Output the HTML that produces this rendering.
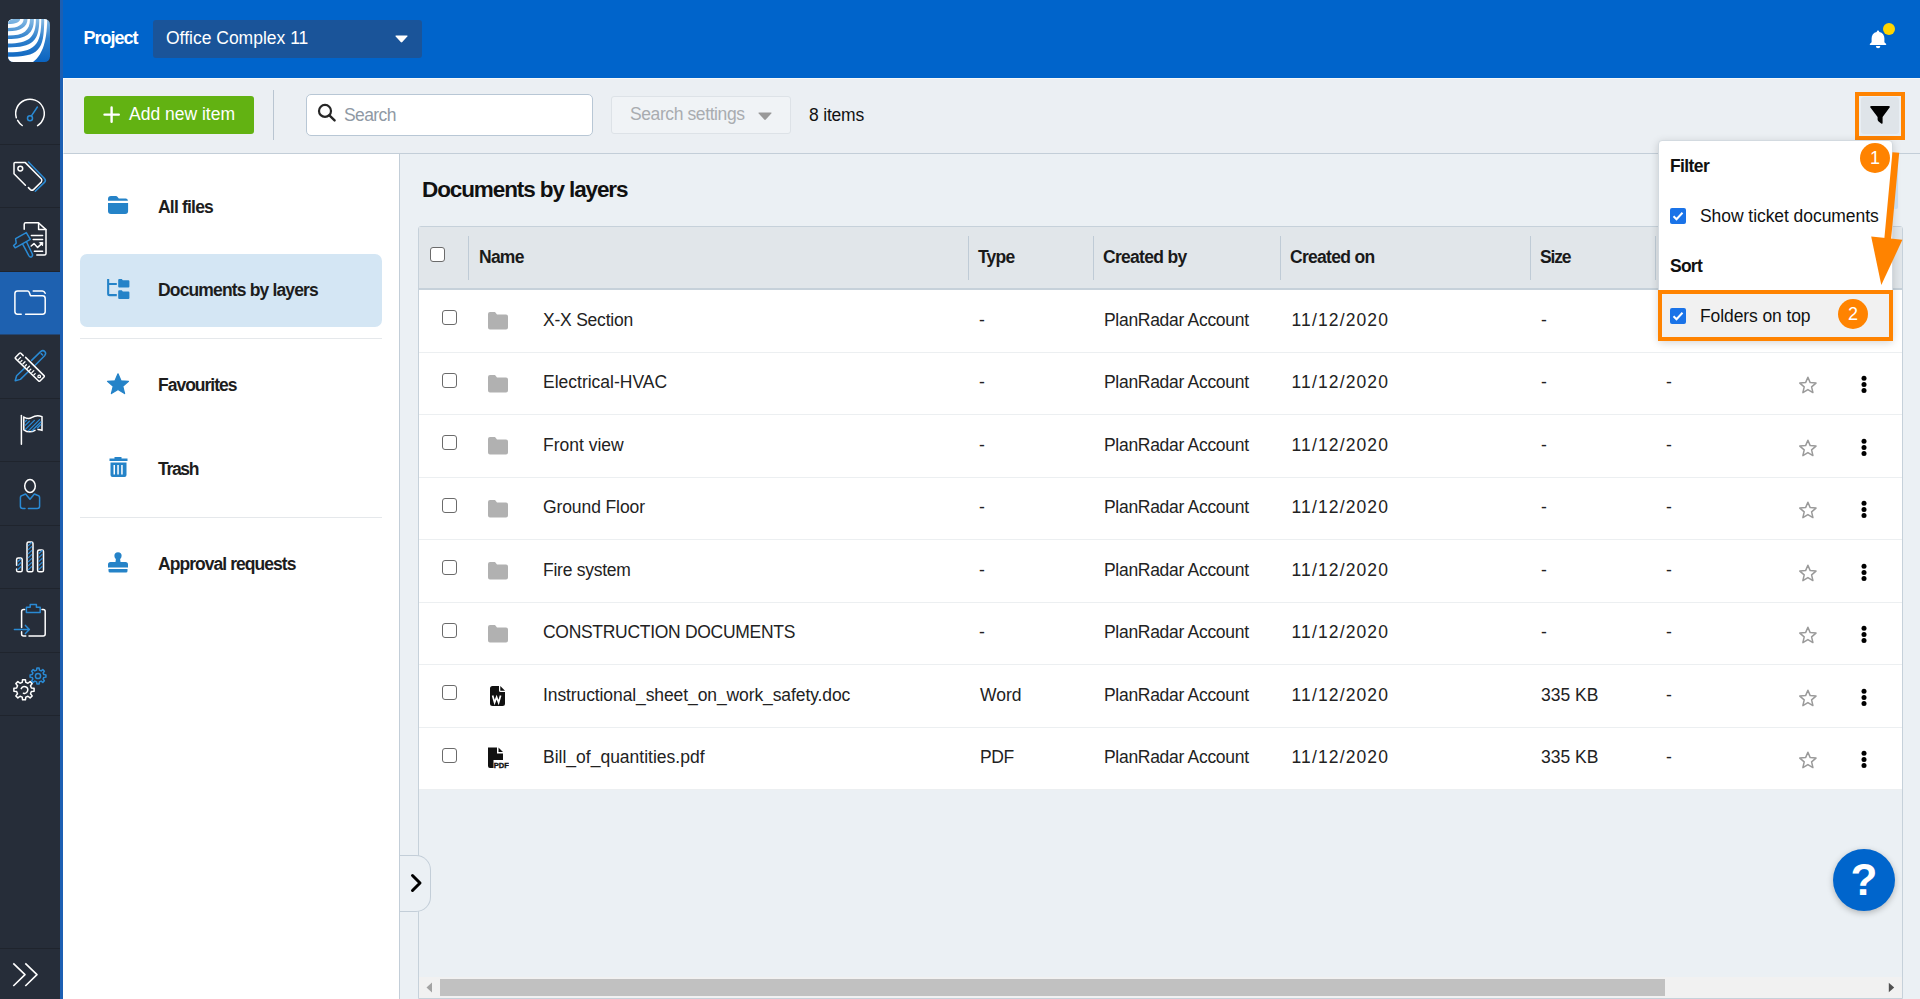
<!DOCTYPE html>
<html><head><meta charset="utf-8">
<style>
*{box-sizing:border-box;margin:0;padding:0}
html,body{width:1920px;height:999px;overflow:hidden;background:#ebf0f4;font-family:"Liberation Sans",sans-serif;color:#1d1d1d}
.a{position:absolute}
.t{position:absolute;white-space:nowrap;font-size:17.5px;line-height:20px}
.b{font-weight:700}
#side{left:0;top:0;width:60px;height:999px;background:#262d39}
#stripe{left:60px;top:0;width:3px;height:999px;background:#1c5fb3}
.sep{position:absolute;left:0;width:60px;height:1px;background:#1e232c}
#top{left:63px;top:0;width:1857px;height:78px;background:#0064cb}
#tool{left:63px;top:78px;width:1857px;height:76px;background:#ebeff3;border-top:1px solid #f7f9fa;border-left:1px solid #f7f9fa;border-bottom:1px solid #c3ced8}
#panel{left:63px;top:154px;width:337px;height:845px;background:#fff;border-right:1px solid #c3ced8}
#main{left:400px;top:154px;width:1520px;height:845px;background:#ebf0f4}
#tbl{left:418px;top:226px;width:1485px;height:773px;border:1px solid #c6d1da;border-radius:3px 3px 0 0;background:#ebf0f4}
.row{position:absolute;left:0;width:1483px;background:#fff;border-bottom:1px solid #edf0f2}
.cb{position:absolute;width:15px;height:15px;border:1.3px solid #6b6b6b;border-radius:3px;background:#fff}
.vd{position:absolute;width:1px;background:#bfcbd6}
</style></head><body>
<!-- SIDEBAR -->
<div id="side" class="a">
  <svg class="a" style="left:0;top:0" width="60" height="999" viewBox="0 0 60 999">
    <defs>
      <clipPath id="lg"><rect x="8" y="19" width="42" height="43" rx="5.5"/></clipPath>
    </defs>
    <linearGradient id="lgg" x1="0" y1="19" x2="0" y2="62" gradientUnits="userSpaceOnUse"><stop offset="0" stop-color="#86bbe4"/><stop offset="0.45" stop-color="#2f80cc"/><stop offset="1" stop-color="#0a63c0"/></linearGradient>
    <g clip-path="url(#lg)">
      <rect x="8" y="19" width="42" height="43" fill="url(#lgg)"/>
      <path d="M8 19 L8 64 L33 62 C41 56 47 44 47.2 19 Z" fill="#fff"/>
      <path d="M8 19 L8 56.7 C38.8 56.7 44.2 51.0 44.2 19 Z" fill="url(#lgg)"/>
      <path d="M8 19 L8 52.3 C34.6 52.3 41.3 45.6 41.3 19 Z" fill="#fff"/>
      <path d="M8 19 L8 47.4 C32.4 47.4 39.3 41.2 39.3 19 Z" fill="url(#lgg)"/>
      <path d="M8 19 L8 43.5 C28.9 43.5 35.9 37.4 35.9 19 Z" fill="#fff"/>
      <path d="M8 19 L8 39 C26.6 39 33.9 33.4 33.9 19 Z" fill="url(#lgg)"/>
      <path d="M8 19 L8 35.6 C23.4 35.6 30 30.6 30 19 Z" fill="#fff"/>
      <path d="M8 19 L8 31.2 C20.7 31.2 27.5 26.9 27.5 19 Z" fill="url(#lgg)"/>
      <path d="M8 19 L8 28 C17.7 28 23.6 24.6 23.6 19 Z" fill="#fff"/>
      <path d="M8 19 L8 24.1 C15.3 24.1 20.2 22.1 20.2 19 Z" fill="url(#lgg)"/>
    </g>
    <!-- separators -->
    <g fill="#1f242d">
      <rect x="0" y="144" width="60" height="1"/>
      <rect x="0" y="207" width="60" height="1"/>
      <rect x="0" y="271" width="60" height="1"/>
      <rect x="0" y="398" width="60" height="1"/>
      <rect x="0" y="461" width="60" height="1"/>
      <rect x="0" y="525" width="60" height="1"/>
      <rect x="0" y="588" width="60" height="1"/>
      <rect x="0" y="652" width="60" height="1"/>
      <rect x="0" y="715" width="60" height="1"/>
      <rect x="0" y="948" width="60" height="1"/>
    </g>
    <rect x="0" y="272" width="60" height="62.5" fill="#1e61b0"/>
    <g fill="none" stroke-width="1.5" stroke-linecap="round" stroke-linejoin="round">
      <!-- gauge -->
      <path d="M37.58 125.63 A14.3 14.3 0 1 0 16.32 117.68" stroke="#fff"/>
      <path d="M17.6 120.4 A14.3 14.3 0 0 0 22.2 125.5" stroke="#fff"/>
      <path d="M31.6 115.6 L37.4 107" stroke="#2a8ad4"/>
      <circle cx="30" cy="118.2" r="2.5" stroke="#2a8ad4"/>
      <!-- tag -->
      <path d="M25.4 185.3 L14 173.8 L14 163.6 Q14 162.6 15 162.6 L25.3 162.6 L41.3 178.8 Q42.7 180.4 41.3 182 L33.5 189.6 Q32 191 30.4 189.6 L28.4 187.6" stroke="#fff"/>
      <circle cx="20.3" cy="168.6" r="2.4" stroke="#fff"/>
      <path d="M28.5 162 L44.5 178.4 Q46.3 180.4 44.5 182.4 L35.3 191.2" stroke="#2a8ad4"/>
      <!-- doc + hammer -->
      <path d="M24.2 229.3 L24.2 224.2 Q24.2 222.7 25.7 222.7 L38.4 222.7 L46 229.6 L46 253.5 Q46 255 44.5 255 L36.8 255" stroke="#fff"/>
      <path d="M38.6 223 L38.6 229.6 L45.8 229.6" stroke="#fff"/>
      <path d="M31.4 235.5 L42.6 235.5 M33.2 239.4 L42.6 239.4 M34.4 251.2 L42.6 251.2" stroke="#fff"/>
      <path d="M31.2 246 L34 243.6 L37.6 247.4 L41.8 243.6" stroke="#fff"/>
      <path d="M39.8 242.6 L42.8 242.4 L42.6 245.4 Z" fill="#fff" stroke="#fff" stroke-width="1"/>
      <path d="M15.6 238.6 L26.3 232.6 L30.3 239.4 L15.2 247.8 L13.6 245.6 L16.2 243.2 Z" stroke="#2a8ad4"/>
      <path d="M22.8 244.3 L28.8 255.6 Q30.2 257.8 31.8 256.6 Q33 255.6 32.2 253.8 L26.6 242" stroke="#2a8ad4"/>
      <!-- folder (active) -->
      <path d="M21.2 314.2 L17.5 314.2 Q14.9 314.2 14.9 311.6 L14.9 293.6 Q14.9 291 17.5 291 L27.6 291 Q28.7 291 29.2 292.2 L30.5 295.8 L42.5 295.8 Q45.2 295.8 45.2 298.5 L45.2 311.6 Q45.2 314.2 42.5 314.2 L25.6 314.2" stroke="#fff"/>
      <path d="M33.2 291 L42.4 291 Q44.3 291 45.2 293.2" stroke="#fff"/>
      <!-- pencil -->
      <path d="M31.6 360.4 L40.6 351.6 Q43 349.6 44.8 351.6 Q46.6 353.6 44.6 355.8 L35.4 365 M24.4 368.4 L16.6 375.8 L15.2 380.8 L20.4 379.4 L28.2 371.8" stroke="#2a8ad4"/>
      <path d="M41.2 353.6 L42.6 355" stroke="#2a8ad4"/>
      <!-- ruler -->
      <path d="M15.4 358.2 L20.2 353.2 L44.2 376.4 L39.3 381.2 Z" fill="#262d39" stroke="none"/>
      <path d="M23.2 355.6 L20.9 353.3 Q20.2 352.6 19.5 353.3 L15.6 357.2 Q14.9 357.9 15.6 358.6 L38.6 381 Q39.3 381.7 40 381 L44 377 Q44.7 376.3 44 375.6 L25.6 357.4" stroke="#fff"/>
      <path d="M18.6 359.4 L20.6 357.4 M20.8 361.6 L22 360.4 M23 363.8 L25 361.8 M25.2 366 L26.4 364.8 M27.4 368.2 L29.4 366.2 M29.6 370.4 L30.8 369.2 M31.8 372.6 L33.8 370.6 M34 374.8 L35.2 373.6" stroke="#fff" stroke-width="1.3"/>
      <circle cx="39.2" cy="376.4" r="1.3" stroke="#fff" stroke-width="1.3"/>
      <!-- flag -->
      <path d="M21.4 415.6 L21.4 444.2" stroke="#fff"/>
      <path d="M23.8 417 L23.8 429.8 Q29 433.6 35 430.4 M38 429.4 Q40 429.6 42 430.4 L42 416.6 Q36.5 414.6 32 417.4 Q28 420 23.8 417" stroke="#fff"/>
      <path d="M25.2 421.6 L26.6 420.2 M25.2 425.4 L29.4 421.2 M25.4 429.4 L34.4 420.4 M28.6 430.6 L39.6 419.6 M32 430.8 L40.8 422 M37.4 428 L40.6 424.8" stroke="#2a8ad4" stroke-width="1.3"/>
      <!-- person -->
      <ellipse cx="30" cy="486" rx="5.3" ry="6.5" stroke="#fff"/>
      <path d="M25 508.4 L22.6 508.4 Q20.4 508.4 20.4 506.2 L20.4 497.8 Q20.4 495.6 22.6 495.2 L25.6 494 L30 499.2 L34.4 494 L37.4 495.2 Q39.6 495.6 39.6 497.8 L39.6 506.2 Q39.6 508.4 37.4 508.4 L28.4 508.4" stroke="#2a8ad4"/>
      <!-- bar chart -->
      <path d="M16.6 565.2 L16.6 559.6 Q16.6 558 18.2 558 L20.6 558 Q22.2 558 22.2 559.6 L22.2 570.2 Q22.2 571.8 20.6 571.8 L18.2 571.8 Q16.6 571.8 16.6 570.2 L16.6 569" stroke="#fff"/>
      <rect x="27" y="542" width="6" height="29.8" rx="1.6" stroke="#fff"/>
      <rect x="37.6" y="550" width="5.9" height="21.8" rx="1.6" stroke="#fff"/>
      <path d="M18 561.6 L20.6 559.2 M18 565.4 L20.8 562.8 M18 569.4 L20.8 566.8 M28.4 545.6 L31.6 542.6 M28.4 549.6 L31.6 546.6 M28.4 553.6 L31.6 550.6 M28.4 557.6 L31.6 554.6 M28.4 561.6 L31.6 558.6 M28.4 565.6 L31.6 562.6 M28.4 569.6 L31.6 566.6 M39 553.4 L42.2 550.6 M39 557.4 L42.2 554.4 M39 561.4 L42.2 558.4 M39 565.4 L42.2 562.4 M39 569.4 L42.2 566.4" stroke="#2a8ad4" stroke-width="1.3"/>
      <!-- clipboard -->
      <path d="M24.6 609.6 L23.6 609.6 Q21.6 609.6 21.6 611.6 L21.6 627.4 M21.6 631.8 L21.6 634 Q21.6 636 23.6 636 L25.8 636 M29 636 L43.2 636 Q45.2 636 45.2 634 L45.2 611.6 Q45.2 609.6 43.2 609.6 L42 609.6" stroke="#fff"/>
      <path d="M26.4 612.6 L40.2 612.6 L40.2 607.2 L36.4 607.2 L36.4 604.4 L30.2 604.4 L30.2 607.2 L26.4 607.2 Z" stroke="#2a8ad4"/>
      <path d="M14.4 629.5 L29.2 629.5 M25.4 625.4 L29.4 629.5 L25.4 633.6" stroke="#2a8ad4"/>
      <!-- gears -->
      <path d="M39.40 681.83 L39.13 683.92 L36.87 683.92 L36.60 681.83 L34.87 681.12 L33.20 682.40 L31.60 680.80 L32.88 679.13 L32.17 677.40 L30.08 677.13 L30.08 674.87 L32.17 674.60 L32.88 672.87 L31.60 671.20 L33.20 669.60 L34.87 670.88 L36.60 670.17 L36.87 668.08 L39.13 668.08 L39.40 670.17 L41.13 670.88 L42.80 669.60 L44.40 671.20 L43.12 672.87 L43.83 674.60 L45.92 674.87 L45.92 677.13 L43.83 677.40 L43.12 679.13 L44.40 680.80 L42.80 682.40 L41.13 681.12 Z" stroke="#2a8ad4"/>
      <circle cx="38" cy="676" r="2.6" stroke="#2a8ad4"/>
      <path d="M25.77 697.14 L25.44 699.85 L22.56 699.85 L22.23 697.14 L20.03 696.23 L17.88 697.91 L15.84 695.87 L17.52 693.72 L16.61 691.52 L13.90 691.19 L13.90 688.31 L16.61 687.98 L17.52 685.78 L15.84 683.63 L17.88 681.59 L20.03 683.27 L22.23 682.36 L22.56 679.65 L25.44 679.65 L25.77 682.36 L27.97 683.27 L30.12 681.59 L32.16 683.63 L30.48 685.78 L31.39 687.98 L34.10 688.31 L34.10 691.19 L31.39 691.52 L30.48 693.72 L32.16 695.87 L30.12 697.91 L27.97 696.23 Z" stroke="#fff"/>
      <path d="M21.2 688.6 A3.4 3.4 0 1 1 23.4 693.2" stroke="#fff"/>
      <!-- expand chevrons -->
      <path d="M13.3 963.3 L25 974.6 L13.3 986 M25.3 963.3 L37 974.6 L25.3 986" stroke="#fff" stroke-width="1.6" stroke-linecap="butt"/>
    </g>
  </svg>
</div>
<div id="stripe" class="a"></div>

<!-- TOP BAR -->
<div id="top" class="a"></div>
<div class="t b" style="left:83.5px;top:28px;font-size:18px;color:#fff;letter-spacing:-1px">Project</div>
<div class="a" style="left:153px;top:20px;width:269px;height:38px;background:#1a5499;border-radius:3px"></div>
<div class="t" style="left:166px;top:28px;color:#fff">Office Complex 11</div>
<svg class="a" style="left:394px;top:34px" width="15" height="10" viewBox="0 0 15 10"><path d="M2 1.5 L13 1.5 Q14 1.5 13.3 2.4 L8.3 8 Q7.5 8.8 6.7 8 L1.7 2.4 Q1 1.5 2 1.5 Z" fill="#fff"/></svg>
<!-- bell -->
<svg class="a" style="left:1866px;top:26px" width="24" height="26" viewBox="0 0 24 26">
  <path d="M12 4.6 Q13.2 4.6 13.3 6 Q18.4 7.2 18.4 12.6 L18.4 16.2 L20.2 18 Q20.6 19.1 19.5 19.1 L4.5 19.1 Q3.4 19.1 3.8 18 L5.6 16.2 L5.6 12.6 Q5.6 7.2 10.7 6 Q10.8 4.6 12 4.6 Z" fill="#fff"/>
  <path d="M9.9 20 L14.3 20 Q14.3 22.2 12.1 22.2 Q9.9 22.2 9.9 20 Z" fill="#fff"/>
</svg>
<div class="a" style="left:1883px;top:23px;width:12px;height:12px;border-radius:50%;background:#ffd500"></div>

<!-- TOOLBAR -->
<div id="tool" class="a"></div>
<div class="a" style="left:84px;top:96px;width:170px;height:38px;background:#62b212;border-radius:3px"></div>
<svg class="a" style="left:103px;top:106px" width="18" height="18" viewBox="0 0 18 18"><path d="M8.6 1.5 L8.6 15.8 M1.5 8.6 L15.8 8.6" stroke="#fff" stroke-width="2.4" stroke-linecap="round"/></svg>
<div class="t" style="left:129px;top:104px;color:#fff">Add new item</div>
<div class="a" style="left:273px;top:90px;width:1px;height:50px;background:#b9c5d1"></div>
<div class="a" style="left:306px;top:94px;width:287px;height:42px;background:#fff;border:1px solid #b8c7d5;border-radius:5px"></div>
<svg class="a" style="left:317px;top:103px" width="20" height="20" viewBox="0 0 20 20"><circle cx="8" cy="7.9" r="6" fill="none" stroke="#262626" stroke-width="2.2"/><path d="M12.4 12.4 L17.6 17.4" stroke="#262626" stroke-width="2.4" stroke-linecap="round"/></svg>
<div class="t" style="left:344px;top:105px;color:#8f99a4;letter-spacing:-0.6px">Search</div>
<div class="a" style="left:611px;top:96px;width:180px;height:38px;background:#f0f3f6;border:1px solid #dde2e7;border-radius:3px"></div>
<div class="t" style="left:630px;top:104px;color:#a9acb0;letter-spacing:-0.4px">Search settings</div>
<svg class="a" style="left:757px;top:111px" width="16" height="11" viewBox="0 0 16 11"><path d="M2 1.5 L14 1.5 Q15 1.5 14.3 2.4 L8.8 8.6 Q8 9.4 7.2 8.6 L1.7 2.4 Q1 1.5 2 1.5 Z" fill="#999"/></svg>
<div class="t" style="left:809px;top:105px;color:#111;letter-spacing:-0.2px">8 items</div>
<!-- filter btn -->
<div class="a" style="left:1855px;top:92px;width:50px;height:48px;border:4px solid #ff8300;background:#e8eef4"></div>
<div class="a" style="left:1861px;top:97px;width:38px;height:37px;border-radius:3px;background:#dfe4e9"></div>
<svg class="a" style="left:1868px;top:104px" width="24" height="22" viewBox="0 0 24 22"><path d="M3.4 2 L20.6 2 Q22.6 2 21.6 3.6 L14.6 13 L14.6 18.8 Q14.6 20.4 13.2 19.6 L10.6 17.6 Q9.6 16.8 9.6 15.6 L9.6 13 L2.4 3.6 Q1.4 2 3.4 2 Z" fill="#000"/></svg>

<!-- LEFT PANEL -->
<div id="panel" class="a"></div>
<div class="a" style="left:80px;top:254px;width:302px;height:73px;background:#d4e6f4;border-radius:7px"></div>
<div class="a" style="left:80px;top:338px;width:302px;height:1px;background:#e5e8eb"></div>
<div class="a" style="left:80px;top:517px;width:302px;height:1px;background:#e5e8eb"></div>
<svg class="a" style="left:100px;top:190px" width="36" height="400" viewBox="0 0 36 400">
  <g fill="#2583c8">
    <!-- all files folder -->
    <path d="M8 9 Q8 6 11 6 L16 6 Q16.8 6 17.4 6.8 L18.8 8.6 L25.8 8.6 Q27.6 8.6 28 10.8 L8 10.8 Z"/>
    <path d="M8 13 L28.1 13 L28.1 21 Q28.1 24 25.1 24 L11 24 Q8 24 8 21 Z"/>
    <!-- docs by layers icon -->
    <path d="M7.1 89 L9.2 89 L9.2 93 L16.8 93 L16.8 95 L9.2 95 L9.2 104.1 L16.8 104.1 L16.8 106.3 L9.6 106.3 Q7.1 106.3 7.1 103.8 Z"/>
    <path d="M18.2 90 Q18.2 89 19.2 89 L21.8 89 L22.8 90.3 L28.4 90.3 Q29.4 90.3 29.4 91.3 L29.4 96.6 Q29.4 97.6 28.4 97.6 L19.2 97.6 Q18.2 97.6 18.2 96.6 Z"/>
    <path d="M18.2 101.2 Q18.2 100.2 19.2 100.2 L21.8 100.2 L22.8 101.5 L28.4 101.5 Q29.4 101.5 29.4 102.5 L29.4 107.9 Q29.4 108.9 28.4 108.9 L19.2 108.9 Q18.2 108.9 18.2 107.9 Z"/>
    <!-- star x107.5-128.75 y373.75-393.75 -->
    <path d="M18 183.8 L21 190.8 L28.5 191.3 L22.8 196.3 L24.6 203.6 L18 199.6 L11.4 203.6 L13.2 196.3 L7.5 191.3 L15 190.8 Z" stroke="#2583c8" stroke-width="1.2" stroke-linejoin="round"/>
    <!-- trash x109.5-127.5 y457-477 -->
    <path d="M14.5 267 L21.5 267 L21.5 268.5 L27.5 268.5 L27.5 271 L9.5 271 L9.5 268.5 L14.5 268.5 Z"/>
    <path d="M10.5 272.5 L26.5 272.5 L26.5 285 Q26.5 287 24.5 287 L12.5 287 Q10.5 287 10.5 285 Z M13.5 275 L13.5 284.5 L15 284.5 L15 275 Z M17.3 275 L17.3 284.5 L18.8 284.5 L18.8 275 Z M21.2 275 L21.2 284.5 L22.7 284.5 L22.7 275 Z" fill-rule="evenodd"/>
    <!-- stamp x107.5-128 y552.5-572.5 -->
    <circle cx="18" cy="365.8" r="3.6"/>
    <path d="M16 368 L20 368 L20.5 372 L25.5 372 Q28 372 28 374.5 L28 377.5 L8 377.5 L8 374.5 Q8 372 10.5 372 L15.5 372 Z"/>
    <path d="M8.5 379 L27.5 379 L27.5 381 Q27.5 382.5 26 382.5 L10 382.5 Q8.5 382.5 8.5 381 Z"/>
  </g>
</svg>
<div class="t b" style="left:158px;top:197px;letter-spacing:-0.8px">All files</div>
<div class="t b" style="left:158px;top:280px;letter-spacing:-0.85px">Documents by layers</div>
<div class="t b" style="left:158px;top:375px;letter-spacing:-1px">Favourites</div>
<div class="t b" style="left:158px;top:459px;letter-spacing:-1.3px">Trash</div>
<div class="t b" style="left:158px;top:554px;letter-spacing:-0.95px">Approval requests</div>

<!-- MAIN -->
<div id="main" class="a"></div>
<div class="t b" style="left:422px;top:177px;font-size:22.5px;line-height:26px;letter-spacing:-1.1px;color:#111">Documents by layers</div>
<div id="tbl" class="a"></div>
<div class="a" style="left:419px;top:227px;width:1483px;height:62px;background:#e1e6ea;border-bottom:1px solid #c6d1da"></div>
<div class="a" style="left:419px;top:289px;width:1483px;height:1px;background:#c6d1da"></div>
<div class="cb" style="left:430px;top:247px"></div>
<div class="vd" style="left:468px;top:236px;height:44px"></div>
<div class="vd" style="left:968px;top:236px;height:44px"></div>
<div class="vd" style="left:1093px;top:236px;height:44px"></div>
<div class="vd" style="left:1280px;top:236px;height:44px"></div>
<div class="vd" style="left:1530px;top:236px;height:44px"></div>
<div class="vd" style="left:1655px;top:236px;height:44px"></div>
<div class="t b" style="left:479px;top:247px;letter-spacing:-0.75px;color:#1a1a1a">Name</div>
<div class="t b" style="left:978px;top:247px;letter-spacing:-0.8px;color:#1a1a1a">Type</div>
<div class="t b" style="left:1103px;top:247px;letter-spacing:-0.7px;color:#1a1a1a">Created by</div>
<div class="t b" style="left:1290px;top:247px;letter-spacing:-0.7px;color:#1a1a1a">Created on</div>
<div class="t b" style="left:1540px;top:247px;letter-spacing:-1.2px;color:#1a1a1a">Size</div>
<div class="a" style="left:419px;top:290.0px;width:1483px;height:62.5px;background:#fff"></div>
<div class="a" style="left:419px;top:352px;width:1483px;height:1px;background:#eceff1"></div>
<div class="cb" style="left:442px;top:310.0px"></div>
<svg class="a" style="left:487px;top:311.0px" width="22" height="20" viewBox="0 0 22 20"><path d="M1 3 Q1 1 3 1 L8 1 L10 3.5 L19 3.5 Q21 3.5 21 5.5 L21 16.5 Q21 18.5 19 18.5 L3 18.5 Q1 18.5 1 16.5 Z" fill="#b1b1b1"/></svg>
<div class="t" style="left:543px;top:309.8px;color:#222;letter-spacing:-0.22px">X-X Section</div>
<div class="t" style="left:979px;top:309.8px;color:#222;letter-spacing:0px">-</div>
<div class="t" style="left:1104px;top:309.8px;color:#222;letter-spacing:-0.3px">PlanRadar Account</div>
<div class="t" style="left:1291.5px;top:309.8px;color:#222;letter-spacing:1.13px">11/12/2020</div>
<div class="t" style="left:1541px;top:309.8px;color:#222">-</div>
<div class="t" style="left:1666px;top:309.8px;color:#222">-</div>
<svg class="a" style="left:1797px;top:312.5px" width="22" height="20" viewBox="0 0 22 20"><path d="M10.9 2.2 L13.2 7.6 L19 8.1 L14.6 11.9 L15.9 17.6 L10.9 14.6 L5.9 17.6 L7.2 11.9 L2.8 8.1 L8.6 7.6 Z" fill="none" stroke="#9a9a9a" stroke-width="1.5" stroke-linejoin="round"/></svg>
<svg class="a" style="left:1859px;top:312.5px" width="10" height="20" viewBox="0 0 10 20"><circle cx="5" cy="3.2" r="2.5" fill="#000"/><circle cx="5" cy="9.4" r="2.5" fill="#000"/><circle cx="5" cy="15.6" r="2.5" fill="#000"/></svg>
<div class="a" style="left:419px;top:352.5px;width:1483px;height:62.5px;background:#fff"></div>
<div class="a" style="left:419px;top:414px;width:1483px;height:1px;background:#eceff1"></div>
<div class="cb" style="left:442px;top:372.5px"></div>
<svg class="a" style="left:487px;top:373.5px" width="22" height="20" viewBox="0 0 22 20"><path d="M1 3 Q1 1 3 1 L8 1 L10 3.5 L19 3.5 Q21 3.5 21 5.5 L21 16.5 Q21 18.5 19 18.5 L3 18.5 Q1 18.5 1 16.5 Z" fill="#b1b1b1"/></svg>
<div class="t" style="left:543px;top:372.3px;color:#222;letter-spacing:0px">Electrical-HVAC</div>
<div class="t" style="left:979px;top:372.3px;color:#222;letter-spacing:0px">-</div>
<div class="t" style="left:1104px;top:372.3px;color:#222;letter-spacing:-0.3px">PlanRadar Account</div>
<div class="t" style="left:1291.5px;top:372.3px;color:#222;letter-spacing:1.13px">11/12/2020</div>
<div class="t" style="left:1541px;top:372.3px;color:#222">-</div>
<div class="t" style="left:1666px;top:372.3px;color:#222">-</div>
<svg class="a" style="left:1797px;top:375.0px" width="22" height="20" viewBox="0 0 22 20"><path d="M10.9 2.2 L13.2 7.6 L19 8.1 L14.6 11.9 L15.9 17.6 L10.9 14.6 L5.9 17.6 L7.2 11.9 L2.8 8.1 L8.6 7.6 Z" fill="none" stroke="#9a9a9a" stroke-width="1.5" stroke-linejoin="round"/></svg>
<svg class="a" style="left:1859px;top:375.0px" width="10" height="20" viewBox="0 0 10 20"><circle cx="5" cy="3.2" r="2.5" fill="#000"/><circle cx="5" cy="9.4" r="2.5" fill="#000"/><circle cx="5" cy="15.6" r="2.5" fill="#000"/></svg>
<div class="a" style="left:419px;top:415.0px;width:1483px;height:62.5px;background:#fff"></div>
<div class="a" style="left:419px;top:477px;width:1483px;height:1px;background:#eceff1"></div>
<div class="cb" style="left:442px;top:435.0px"></div>
<svg class="a" style="left:487px;top:436.0px" width="22" height="20" viewBox="0 0 22 20"><path d="M1 3 Q1 1 3 1 L8 1 L10 3.5 L19 3.5 Q21 3.5 21 5.5 L21 16.5 Q21 18.5 19 18.5 L3 18.5 Q1 18.5 1 16.5 Z" fill="#b1b1b1"/></svg>
<div class="t" style="left:543px;top:434.8px;color:#222;letter-spacing:0px">Front view</div>
<div class="t" style="left:979px;top:434.8px;color:#222;letter-spacing:0px">-</div>
<div class="t" style="left:1104px;top:434.8px;color:#222;letter-spacing:-0.3px">PlanRadar Account</div>
<div class="t" style="left:1291.5px;top:434.8px;color:#222;letter-spacing:1.13px">11/12/2020</div>
<div class="t" style="left:1541px;top:434.8px;color:#222">-</div>
<div class="t" style="left:1666px;top:434.8px;color:#222">-</div>
<svg class="a" style="left:1797px;top:437.5px" width="22" height="20" viewBox="0 0 22 20"><path d="M10.9 2.2 L13.2 7.6 L19 8.1 L14.6 11.9 L15.9 17.6 L10.9 14.6 L5.9 17.6 L7.2 11.9 L2.8 8.1 L8.6 7.6 Z" fill="none" stroke="#9a9a9a" stroke-width="1.5" stroke-linejoin="round"/></svg>
<svg class="a" style="left:1859px;top:437.5px" width="10" height="20" viewBox="0 0 10 20"><circle cx="5" cy="3.2" r="2.5" fill="#000"/><circle cx="5" cy="9.4" r="2.5" fill="#000"/><circle cx="5" cy="15.6" r="2.5" fill="#000"/></svg>
<div class="a" style="left:419px;top:477.5px;width:1483px;height:62.5px;background:#fff"></div>
<div class="a" style="left:419px;top:539px;width:1483px;height:1px;background:#eceff1"></div>
<div class="cb" style="left:442px;top:497.5px"></div>
<svg class="a" style="left:487px;top:498.5px" width="22" height="20" viewBox="0 0 22 20"><path d="M1 3 Q1 1 3 1 L8 1 L10 3.5 L19 3.5 Q21 3.5 21 5.5 L21 16.5 Q21 18.5 19 18.5 L3 18.5 Q1 18.5 1 16.5 Z" fill="#b1b1b1"/></svg>
<div class="t" style="left:543px;top:497.3px;color:#222;letter-spacing:-0.1px">Ground Floor</div>
<div class="t" style="left:979px;top:497.3px;color:#222;letter-spacing:0px">-</div>
<div class="t" style="left:1104px;top:497.3px;color:#222;letter-spacing:-0.3px">PlanRadar Account</div>
<div class="t" style="left:1291.5px;top:497.3px;color:#222;letter-spacing:1.13px">11/12/2020</div>
<div class="t" style="left:1541px;top:497.3px;color:#222">-</div>
<div class="t" style="left:1666px;top:497.3px;color:#222">-</div>
<svg class="a" style="left:1797px;top:500.0px" width="22" height="20" viewBox="0 0 22 20"><path d="M10.9 2.2 L13.2 7.6 L19 8.1 L14.6 11.9 L15.9 17.6 L10.9 14.6 L5.9 17.6 L7.2 11.9 L2.8 8.1 L8.6 7.6 Z" fill="none" stroke="#9a9a9a" stroke-width="1.5" stroke-linejoin="round"/></svg>
<svg class="a" style="left:1859px;top:500.0px" width="10" height="20" viewBox="0 0 10 20"><circle cx="5" cy="3.2" r="2.5" fill="#000"/><circle cx="5" cy="9.4" r="2.5" fill="#000"/><circle cx="5" cy="15.6" r="2.5" fill="#000"/></svg>
<div class="a" style="left:419px;top:540.0px;width:1483px;height:62.5px;background:#fff"></div>
<div class="a" style="left:419px;top:602px;width:1483px;height:1px;background:#eceff1"></div>
<div class="cb" style="left:442px;top:560.0px"></div>
<svg class="a" style="left:487px;top:561.0px" width="22" height="20" viewBox="0 0 22 20"><path d="M1 3 Q1 1 3 1 L8 1 L10 3.5 L19 3.5 Q21 3.5 21 5.5 L21 16.5 Q21 18.5 19 18.5 L3 18.5 Q1 18.5 1 16.5 Z" fill="#b1b1b1"/></svg>
<div class="t" style="left:543px;top:559.8px;color:#222;letter-spacing:-0.25px">Fire system</div>
<div class="t" style="left:979px;top:559.8px;color:#222;letter-spacing:0px">-</div>
<div class="t" style="left:1104px;top:559.8px;color:#222;letter-spacing:-0.3px">PlanRadar Account</div>
<div class="t" style="left:1291.5px;top:559.8px;color:#222;letter-spacing:1.13px">11/12/2020</div>
<div class="t" style="left:1541px;top:559.8px;color:#222">-</div>
<div class="t" style="left:1666px;top:559.8px;color:#222">-</div>
<svg class="a" style="left:1797px;top:562.5px" width="22" height="20" viewBox="0 0 22 20"><path d="M10.9 2.2 L13.2 7.6 L19 8.1 L14.6 11.9 L15.9 17.6 L10.9 14.6 L5.9 17.6 L7.2 11.9 L2.8 8.1 L8.6 7.6 Z" fill="none" stroke="#9a9a9a" stroke-width="1.5" stroke-linejoin="round"/></svg>
<svg class="a" style="left:1859px;top:562.5px" width="10" height="20" viewBox="0 0 10 20"><circle cx="5" cy="3.2" r="2.5" fill="#000"/><circle cx="5" cy="9.4" r="2.5" fill="#000"/><circle cx="5" cy="15.6" r="2.5" fill="#000"/></svg>
<div class="a" style="left:419px;top:602.5px;width:1483px;height:62.5px;background:#fff"></div>
<div class="a" style="left:419px;top:664px;width:1483px;height:1px;background:#eceff1"></div>
<div class="cb" style="left:442px;top:622.5px"></div>
<svg class="a" style="left:487px;top:623.5px" width="22" height="20" viewBox="0 0 22 20"><path d="M1 3 Q1 1 3 1 L8 1 L10 3.5 L19 3.5 Q21 3.5 21 5.5 L21 16.5 Q21 18.5 19 18.5 L3 18.5 Q1 18.5 1 16.5 Z" fill="#b1b1b1"/></svg>
<div class="t" style="left:543px;top:622.3px;color:#222;letter-spacing:-0.3px">CONSTRUCTION DOCUMENTS</div>
<div class="t" style="left:979px;top:622.3px;color:#222;letter-spacing:0px">-</div>
<div class="t" style="left:1104px;top:622.3px;color:#222;letter-spacing:-0.3px">PlanRadar Account</div>
<div class="t" style="left:1291.5px;top:622.3px;color:#222;letter-spacing:1.13px">11/12/2020</div>
<div class="t" style="left:1541px;top:622.3px;color:#222">-</div>
<div class="t" style="left:1666px;top:622.3px;color:#222">-</div>
<svg class="a" style="left:1797px;top:625.0px" width="22" height="20" viewBox="0 0 22 20"><path d="M10.9 2.2 L13.2 7.6 L19 8.1 L14.6 11.9 L15.9 17.6 L10.9 14.6 L5.9 17.6 L7.2 11.9 L2.8 8.1 L8.6 7.6 Z" fill="none" stroke="#9a9a9a" stroke-width="1.5" stroke-linejoin="round"/></svg>
<svg class="a" style="left:1859px;top:625.0px" width="10" height="20" viewBox="0 0 10 20"><circle cx="5" cy="3.2" r="2.5" fill="#000"/><circle cx="5" cy="9.4" r="2.5" fill="#000"/><circle cx="5" cy="15.6" r="2.5" fill="#000"/></svg>
<div class="a" style="left:419px;top:665.0px;width:1483px;height:62.5px;background:#fff"></div>
<div class="a" style="left:419px;top:727px;width:1483px;height:1px;background:#eceff1"></div>
<div class="cb" style="left:442px;top:685.0px"></div>
<svg class="a" style="left:486px;top:685px" width="22" height="24" viewBox="0 0 22 24"><path d="M6.5 1 L13 1 L13 5.5 Q13 7 14.5 7 L19 7 L19 18.5 Q19 21 16.5 21 L6.5 21 Q4 21 4 18.5 L4 3.5 Q4 1 6.5 1 Z M14.3 1 L19 5.7 L14.3 5.7 Z" fill="#111"/><path d="M6.6 10.5 L8.6 17.5 L10.6 12.2 L12.6 17.5 L14.6 10.5" fill="none" stroke="#fff" stroke-width="1.7" stroke-linejoin="miter"/></svg>
<div class="t" style="left:543px;top:684.8px;color:#222;letter-spacing:-0.1px">Instructional_sheet_on_work_safety.doc</div>
<div class="t" style="left:980px;top:684.8px;color:#222;letter-spacing:0px">Word</div>
<div class="t" style="left:1104px;top:684.8px;color:#222;letter-spacing:-0.3px">PlanRadar Account</div>
<div class="t" style="left:1291.5px;top:684.8px;color:#222;letter-spacing:1.13px">11/12/2020</div>
<div class="t" style="left:1541px;top:684.8px;color:#222">335 KB</div>
<div class="t" style="left:1666px;top:684.8px;color:#222">-</div>
<svg class="a" style="left:1797px;top:687.5px" width="22" height="20" viewBox="0 0 22 20"><path d="M10.9 2.2 L13.2 7.6 L19 8.1 L14.6 11.9 L15.9 17.6 L10.9 14.6 L5.9 17.6 L7.2 11.9 L2.8 8.1 L8.6 7.6 Z" fill="none" stroke="#9a9a9a" stroke-width="1.5" stroke-linejoin="round"/></svg>
<svg class="a" style="left:1859px;top:687.5px" width="10" height="20" viewBox="0 0 10 20"><circle cx="5" cy="3.2" r="2.5" fill="#000"/><circle cx="5" cy="9.4" r="2.5" fill="#000"/><circle cx="5" cy="15.6" r="2.5" fill="#000"/></svg>
<div class="a" style="left:419px;top:727.5px;width:1483px;height:62.5px;background:#fff"></div>
<div class="a" style="left:419px;top:789px;width:1483px;height:1px;background:#eceff1"></div>
<div class="cb" style="left:442px;top:747.5px"></div>
<svg class="a" style="left:485px;top:746px" width="24" height="24" viewBox="0 0 24 24"><path d="M3 1.5 L12 1.5 L12 7.5 L18 7.5 L18 14 L8.5 14 L8.5 22 L5 22 Q3 22 3 20 Z M13.5 1.5 L18 6 L13.5 6 Z" fill="#111"/><text x="8.8" y="22" font-family="Liberation Sans" font-weight="700" font-size="7.6" fill="#111" stroke="#111" stroke-width="0.35" letter-spacing="-0.1">PDF</text></svg>
<div class="t" style="left:543px;top:747.3px;color:#222;letter-spacing:0px">Bill_of_quantities.pdf</div>
<div class="t" style="left:980px;top:747.3px;color:#222;letter-spacing:-0.4px">PDF</div>
<div class="t" style="left:1104px;top:747.3px;color:#222;letter-spacing:-0.3px">PlanRadar Account</div>
<div class="t" style="left:1291.5px;top:747.3px;color:#222;letter-spacing:1.13px">11/12/2020</div>
<div class="t" style="left:1541px;top:747.3px;color:#222">335 KB</div>
<div class="t" style="left:1666px;top:747.3px;color:#222">-</div>
<svg class="a" style="left:1797px;top:750.0px" width="22" height="20" viewBox="0 0 22 20"><path d="M10.9 2.2 L13.2 7.6 L19 8.1 L14.6 11.9 L15.9 17.6 L10.9 14.6 L5.9 17.6 L7.2 11.9 L2.8 8.1 L8.6 7.6 Z" fill="none" stroke="#9a9a9a" stroke-width="1.5" stroke-linejoin="round"/></svg>
<svg class="a" style="left:1859px;top:750.0px" width="10" height="20" viewBox="0 0 10 20"><circle cx="5" cy="3.2" r="2.5" fill="#000"/><circle cx="5" cy="9.4" r="2.5" fill="#000"/><circle cx="5" cy="15.6" r="2.5" fill="#000"/></svg>
<div class="a" style="left:419px;top:977px;width:1483px;height:21px;background:#f1f1f1"></div>
<div class="a" style="left:440px;top:979px;width:1225px;height:17px;background:#c1c1c1"></div>
<svg class="a" style="left:424px;top:981px" width="10" height="13" viewBox="0 0 10 13"><path d="M8 1.5 L2.5 6.5 L8 11.5 Z" fill="#a3a3a3"/></svg>
<svg class="a" style="left:1886px;top:981px" width="10" height="13" viewBox="0 0 10 13"><path d="M2.8 1.8 L8.2 6.5 L2.8 11.2 Z" fill="#505050"/></svg>
<div class="a" style="left:1833px;top:849px;width:62px;height:62px;border-radius:50%;background:#0065cc;box-shadow:0 2px 6px rgba(0,0,0,0.25)"></div>
<div class="t b" style="left:1833px;top:855px;width:62px;text-align:center;font-size:44px;line-height:50px;color:#fff">?</div>
<!-- collapse handle -->
<div class="a" style="left:399px;top:855px;width:32px;height:57px;background:#ebf0f4;border:1px solid #c3ced8;border-left:none;border-radius:0 15px 15px 0"></div>
<div class="a" style="left:399px;top:855px;width:1px;height:57px;background:#c3ced8"></div>
<svg class="a" style="left:408px;top:872px" width="16" height="22" viewBox="0 0 16 22"><path d="M4.5 3.5 L12 11 L4.5 18.5" fill="none" stroke="#000" stroke-width="3" stroke-linecap="round" stroke-linejoin="round"/></svg>

<!-- POPUP -->
<div class="a" style="left:1658px;top:140px;width:235px;height:201px;background:#fff;border-radius:4px;border:1px solid #d3dae0;box-shadow:0 2px 8px rgba(0,0,0,0.16)"></div>
<div class="t b" style="left:1670px;top:156px;letter-spacing:-0.6px;color:#111">Filter</div>
<div class="a" style="left:1670px;top:208px;width:16px;height:16px;border-radius:2px;background:#1a73e8"></div>
<svg class="a" style="left:1670px;top:208px" width="16" height="16" viewBox="0 0 16 16"><path d="M3.5 8.2 L6.5 11.2 L12.5 4.8" fill="none" stroke="#fff" stroke-width="2"/></svg>
<div class="t" style="left:1700px;top:205.5px;color:#111;letter-spacing:-0.06px">Show ticket documents</div>
<div class="t b" style="left:1670px;top:256px;letter-spacing:-0.75px;color:#111">Sort</div>
<div class="a" style="left:1658px;top:290px;width:235px;height:51px;border:4px solid #ff8300;background:#f1f1f1"></div>
<div class="a" style="left:1670px;top:308px;width:16px;height:16px;border-radius:2px;background:#1a73e8"></div>
<svg class="a" style="left:1670px;top:308px" width="16" height="16" viewBox="0 0 16 16"><path d="M3.5 8.2 L6.5 11.2 L12.5 4.8" fill="none" stroke="#fff" stroke-width="2"/></svg>
<div class="t" style="left:1700px;top:305.5px;color:#111;letter-spacing:-0.1px">Folders on top</div>
<!-- annotations -->
<div class="a" style="left:1893px;top:153px;width:5px;height:56px;border-radius:2px;background:#c8dbeb"></div>
<div class="a" style="left:1838px;top:299px;width:30px;height:30px;border-radius:50%;background:#ff8300"></div>
<div class="t" style="left:1838px;top:304px;width:30px;text-align:center;color:#fff;font-size:18px">2</div>
<div class="a" style="left:1860px;top:143px;width:30px;height:30px;border-radius:50%;background:#ff8300"></div>
<div class="t" style="left:1860px;top:148px;width:30px;text-align:center;color:#fff;font-size:18px">1</div>
<svg class="a" style="left:1860px;top:140px" width="60" height="160" viewBox="1860 140 60 160">
  <path d="M1895.8 152.5 L1887.6 240" stroke="#ff8300" stroke-width="6.8" fill="none"/>
  <path d="M1871.2 236.6 L1902.4 239.8 L1881.3 285 Z" fill="#ff8300"/>
</svg>

</body></html>
